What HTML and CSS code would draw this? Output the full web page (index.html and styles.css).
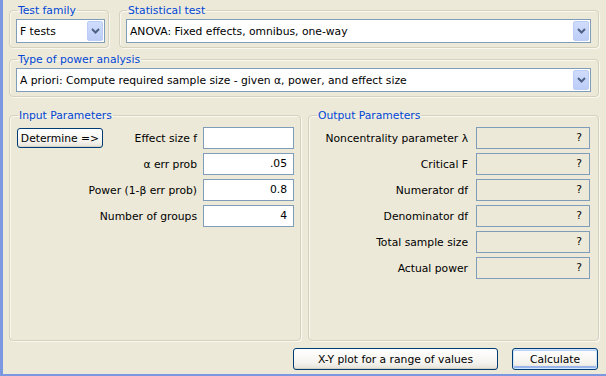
FILE: index.html
```html
<!DOCTYPE html>
<html>
<head>
<meta charset="utf-8">
<link rel="stylesheet" href="styles.css">
</head>
<body>
<div class="window">
  <div class="row-top">
    <fieldset class="group family">
      <legend>Test family</legend>
      <div class="combo combo-family"><span class="combo-text">F tests</span><span class="combo-btn"><svg width="9" height="6" viewBox="0 0 9 6"><polyline points="1,1 4.5,4.5 8,1" fill="none" stroke="#4d6185" stroke-width="2"/></svg></span></div>
    </fieldset>
    <fieldset class="group stat">
      <legend>Statistical test</legend>
      <div class="combo combo-stat"><span class="combo-text">ANOVA: Fixed effects, omnibus, one-way</span><span class="combo-btn"><svg width="9" height="6" viewBox="0 0 9 6"><polyline points="1,1 4.5,4.5 8,1" fill="none" stroke="#4d6185" stroke-width="2"/></svg></span></div>
    </fieldset>
  </div>
  <fieldset class="group type">
    <legend>Type of power analysis</legend>
    <div class="combo combo-type"><span class="combo-text">A priori: Compute required sample size - given α, power, and effect size</span><span class="combo-btn"><svg width="9" height="6" viewBox="0 0 9 6"><polyline points="1,1 4.5,4.5 8,1" fill="none" stroke="#4d6185" stroke-width="2"/></svg></span></div>
  </fieldset>
  <div class="params">
    <fieldset class="group input">
      <legend>Input Parameters</legend>
      <div class="in-grid">
        <button class="btn determine">Determine =&gt;</button>
        <span class="label first">Effect size f</span>
        <div class="field"></div>
        <span class="label">α err prob</span>
        <div class="field">.05</div>
        <span class="label">Power (1-β err prob)</span>
        <div class="field">0.8</div>
        <span class="label">Number of groups</span>
        <div class="field">4</div>
      </div>
    </fieldset>
    <fieldset class="group output">
      <legend>Output Parameters</legend>
      <div class="out-grid">
        <span class="label">Noncentrality parameter λ</span>
        <div class="field ro">?</div>
        <span class="label">Critical F</span>
        <div class="field ro">?</div>
        <span class="label">Numerator df</span>
        <div class="field ro">?</div>
        <span class="label">Denominator df</span>
        <div class="field ro">?</div>
        <span class="label">Total sample size</span>
        <div class="field ro">?</div>
        <span class="label">Actual power</span>
        <div class="field ro">?</div>
      </div>
    </fieldset>
  </div>
  <div class="actions">
    <button class="btn xy">X-Y plot for a range of values</button>
    <button class="btn calc">Calculate</button>
  </div>
</div>
</body>
</html>
```

FILE: styles.css
```css
html, body {
  margin: 0;
  padding: 0;
}
body {
  background: #ece9d8;
  font-family: "DejaVu Sans", "Liberation Sans", sans-serif;
  font-size: 10.75px;
  color: #000;
}
.window {
  width: 606px;
  height: 376px;
  box-sizing: border-box;
  border-left: 3px solid #7b97e0;
  border-bottom: 2px solid #7b97e0;
  padding: 4px 7px 4px 6px;
  display: flex;
  flex-direction: column;
  background: #ece9d8;
}
.group {
  margin: 0;
  min-width: 0;
  box-sizing: border-box;
  border: 1px solid #d5d1bf;
  border-radius: 4px;
  box-shadow: inset 1px 1px 0 #f8f7f0, 1px 1px 0 #f8f7f0;
  padding: 2px 6px 4px 6px;
}
.group legend {
  padding: 0 1px;
  margin-left: 1px;
  line-height: 13px;
  color: #0046d5;
  font-size: 10.75px;
}
.row-top {
  display: flex;
  gap: 10px;
}
.family {
  width: 100px;
}
.stat {
  flex: 1;
}
.type {
  margin-top: 5px;
}
.combo {
  height: 24px;
  box-sizing: border-box;
  border: 1px solid #7f9db9;
  background: #fff;
  display: flex;
  align-items: center;
  padding: 1px;
}
.combo-family {
  width: 89px;
}
.combo-stat {
  width: 465px;
}
.combo-type {
  width: 575px;
}
.combo-text {
  flex: 1;
  padding-left: 2px;
  white-space: nowrap;
  overflow: hidden;
}
.combo-btn {
  width: 16px;
  height: 20px;
  box-sizing: border-box;
  border: 1px solid #bccdf5;
  border-radius: 2px;
  background: linear-gradient(#d0dcfb, #bccdf7);
  display: flex;
  align-items: center;
  justify-content: center;
}
.params {
  flex: 1;
  display: flex;
  gap: 7px;
  margin-top: 12px;
  min-height: 0;
}
.input {
  width: 292px;
  padding: 5px 6px 4px 7px;
}
.output {
  flex: 1;
  padding: 5px 8px 4px 7px;
}
.in-grid {
  display: grid;
  grid-template-columns: 1fr 91px;
  grid-auto-rows: 22px;
  row-gap: 4px;
  column-gap: 6px;
  align-items: center;
}
.in-grid .determine {
  grid-row: 1;
  grid-column: 1;
  justify-self: start;
}
.in-grid .first {
  grid-row: 1;
  grid-column: 1;
  justify-self: end;
}
.out-grid {
  display: grid;
  grid-template-columns: 1fr 114px;
  grid-auto-rows: 22px;
  row-gap: 4px;
  column-gap: 8px;
  align-items: center;
}
.label {
  text-align: right;
  white-space: nowrap;
}
.field {
  height: 22px;
  box-sizing: border-box;
  border: 1px solid #7f9db9;
  background: #fff;
  text-align: right;
  padding-right: 6px;
  line-height: 20px;
}
.field.ro {
  background: #ece9d8;
  padding-right: 7px;
}
.btn {
  font-family: inherit;
  font-size: 10.75px;
  color: #000;
  box-sizing: border-box;
  border: 1px solid #003c74;
  border-radius: 3px;
  background: linear-gradient(#ffffff, #f4f3ee 70%, #e4e1d6);
  box-shadow: inset 0 -1px 0 #d6d0c5;
  padding: 0;
  margin: 0;
  white-space: nowrap;
}
.determine {
  width: 86px;
  height: 20px;
}
.actions {
  display: flex;
  justify-content: flex-end;
  gap: 14px;
  margin-top: 7px;
  padding-right: 1px;
}
.xy {
  width: 205px;
  height: 22px;
}
.calc {
  width: 86px;
  height: 22px;
  box-shadow: inset 0 0 0 1px #cee7ff, inset 0 -2px 0 1px #9ab5ea, inset 0 1px 0 1px #b9d1fa;
}
```
